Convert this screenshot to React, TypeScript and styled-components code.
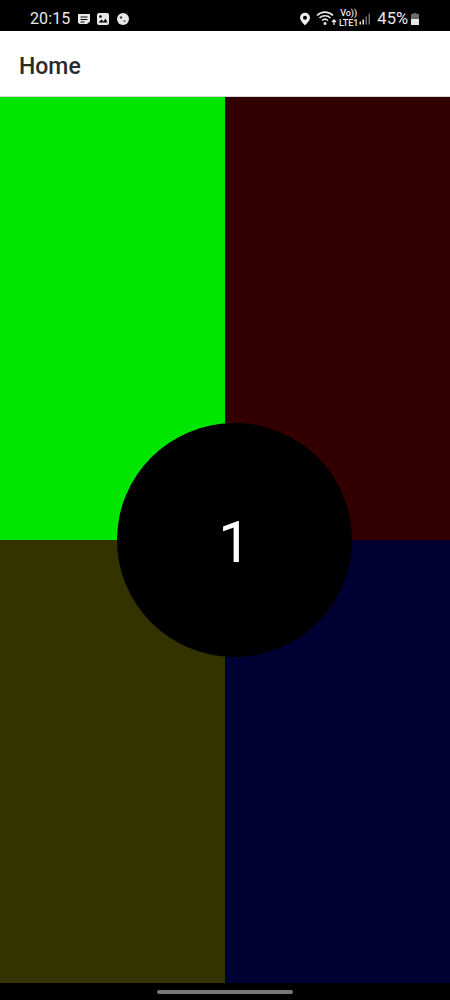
import styled, { createGlobalStyle } from "styled-components";

const GlobalStyle = createGlobalStyle`
  html, body {
    margin: 0;
    padding: 0;
    background: #000;
    font-family: Roboto, "Liberation Sans", sans-serif;
  }
`;

const Screen = styled.div`
  width: 450px;
  height: 1000px;
  display: flex;
  flex-direction: column;
  background: #000;
  overflow: hidden;
`;

const StatusBar = styled.div`
  height: 31px;
  box-sizing: border-box;
  padding: 6px 30px 0 30px;
  display: flex;
  align-items: center;
  justify-content: space-between;
  color: #e8e8e8;
  flex: none;
`;

const StatusGroup = styled.div`
  display: flex;
  align-items: center;
`;

const Clock = styled.span`
  font-size: 16px;
  letter-spacing: 0.1px;
  margin-right: 7px;
`;

const Percent = styled.span`
  font-size: 16.5px;
  margin: 0 2px 0 6px;
`;

const AppBar = styled.header`
  height: 66px;
  flex: none;
  box-sizing: border-box;
  padding: 6px 19px 0;
  display: flex;
  align-items: center;
  background: #fff;
  border-bottom: 1px solid #d8d8d8;
`;

const Title = styled.h1`
  margin: 0;
  font-size: 23px;
  font-weight: 500;
  color: #2a2a2a;
`;

const Board = styled.main`
  position: relative;
  height: 886px;
  flex: none;
  display: grid;
  grid-template-columns: 225px 225px;
  grid-template-rows: 443px 443px;
`;

const Quadrant = styled.div<{ $color: string }>`
  background: ${(p) => p.$color};
`;

const Counter = styled.div`
  position: absolute;
  left: 117px;
  top: 326px;
  width: 235px;
  height: 234px;
  box-sizing: border-box;
  padding-top: 4px;
  border-radius: 50%;
  background: #000;
  color: #fff;
  display: flex;
  align-items: center;
  justify-content: center;
  font-size: 58px;
`;

const NavArea = styled.div`
  flex: 1;
  display: flex;
  align-items: center;
  justify-content: center;
  padding-top: 1px;
`;

const NavPill = styled.div`
  width: 136px;
  height: 4px;
  border-radius: 2px;
  background: #777;
`;

const NoteIcon = () => (
  <svg width="14" height="14" viewBox="0 0 14 14" style={{ marginRight: 5 }}>
    <path d="M1 2h12v7.5L10 12H2.5L1 10.5z" fill="#e8e8e8" />
    <path d="M3.5 5h7M3.5 7.5h7M3.5 10h4" stroke="#000" strokeWidth="1" />
  </svg>
);

const PhotoIcon = () => (
  <svg width="14" height="14" viewBox="0 0 14 14" style={{ marginRight: 6 }}>
    <rect x="1" y="1" width="12" height="12" rx="2" fill="#e8e8e8" />
    <circle cx="4.5" cy="4.5" r="1.3" fill="#000" />
    <path d="M2.5 10.5l3-3 2 2 2-3 2 4z" fill="#000" />
  </svg>
);

const DotIcon = () => (
  <svg width="14" height="14" viewBox="0 0 14 14">
    <circle cx="7" cy="7" r="6" fill="#e8e8e8" />
    <circle cx="5" cy="5.5" r="1.2" fill="#444" />
    <path d="M7.5 8.5l2 1" stroke="#444" strokeWidth="1.2" />
  </svg>
);

const PinIcon = () => (
  <svg width="12" height="14" viewBox="0 0 12 14" style={{ marginRight: 5 }}>
    <path
      fillRule="evenodd"
      d="M6 .8a5 5 0 0 1 5 5C11 9 6 13.4 6 13.4S1 9 1 5.8a5 5 0 0 1 5-5zm0 3a2 2 0 1 0 0 4 2 2 0 0 0 0-4z"
      fill="#f0f0f0"
    />
  </svg>
);

const WifiIcon = () => (
  <svg width="22" height="17" viewBox="0 0 22 17" fill="none" stroke="#e8e8e8" style={{ marginRight: 1 }}>
    <path d="M1 5.5C5.5 1 12.5 1 17 5.5" strokeWidth="1.6" />
    <path d="M3.5 8C6.5 5 11.5 5 14.5 8" strokeWidth="1.6" />
    <path d="M6 10.5C7.8 8.8 10.2 8.8 12 10.5" strokeWidth="1.6" />
    <circle cx="9" cy="13.5" r="1.5" fill="#e8e8e8" stroke="none" />
    <path d="M18 15V10M16 12l2-2 2 2" strokeWidth="1.3" />
  </svg>
);

const VolteLabel = styled.span`
  display: flex;
  flex-direction: column;
  align-items: center;
  font-size: 9px;
  font-weight: 500;
  line-height: 9.5px;
  margin-right: 1px;
`;

const SignalIcon = () => (
  <svg width="12" height="14" viewBox="0 0 12 14" fill="#6e6e6e">
    <rect x="0.5" y="9.5" width="1.5" height="3" fill="#e8e8e8" />
    <rect x="3.5" y="7.5" width="1.5" height="5" fill="#e8e8e8" />
    <rect x="6.5" y="4.5" width="1.5" height="8" />
    <rect x="9.5" y="1.5" width="1.5" height="11" />
  </svg>
);

const BatteryIcon = () => (
  <svg width="10" height="14" viewBox="0 0 10 14">
    <path d="M3.5 1h3v1H9v11H1V2h2.5z" fill="#6a6a6a" />
    <rect x="1" y="7" width="8" height="6" fill="#e8e8e8" />
  </svg>
);

const quadrants = ["#00e600", "#330000", "#333300", "#000033"];

export default function App() {
  return (
    <Screen>
      <GlobalStyle />
      <StatusBar>
        <StatusGroup>
          <Clock>20:15</Clock>
          <NoteIcon />
          <PhotoIcon />
          <DotIcon />
        </StatusGroup>
        <StatusGroup>
          <PinIcon />
          <WifiIcon />
          <VolteLabel>
            <span>Vo))</span>
            <span>LTE1</span>
          </VolteLabel>
          <SignalIcon />
          <Percent>45%</Percent>
          <BatteryIcon />
        </StatusGroup>
      </StatusBar>
      <AppBar>
        <Title>Home</Title>
      </AppBar>
      <Board>
        {quadrants.map((color) => (
          <Quadrant key={color} $color={color} />
        ))}
        <Counter>1</Counter>
      </Board>
      <NavArea>
        <NavPill />
      </NavArea>
    </Screen>
  );
}
